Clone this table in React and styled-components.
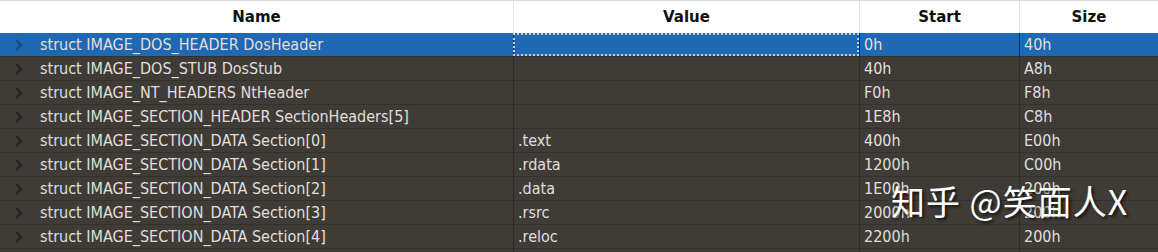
import React from 'react'
import styled, { createGlobalStyle } from 'styled-components'

const Global = createGlobalStyle`
  html, body { margin: 0; padding: 0; background: #3f3c38; }
  body { width: 1158px; height: 252px; overflow: hidden; }
`

const cols = '513px 346px 160px 1fr'

const Table = styled.div`
  position: relative;
  width: 1158px;
  height: 252px;
  overflow: hidden;
  background: #3f3c38;
`

const Header = styled.div`
  display: grid;
  grid-template-columns: ${cols};
  height: 32px;
  background: #fff;
  border-top: 1px solid #d9d9d9;
`

const HeadCell = styled.div`
  display: flex;
  align-items: center;
  justify-content: center;
  font-family: "DejaVu Sans", sans-serif;
  font-weight: bold;
  font-size: 15px;
  color: #111;
  border-left: ${p => (p.first ? 'none' : '1px solid #e3e3e3')};
  padding-bottom: 1px;
`

const Row = styled.div`
  display: grid;
  grid-template-columns: ${cols};
  height: 23px;
  border-bottom: 1px solid #33312e;
  background: ${p => (p.selected ? '#1f68b2' : '#3f3c38')};
`

const Cell = styled.div`
  display: flex;
  align-items: center;
  box-sizing: border-box;
  padding-left: ${p => p.pad || 4}px;
  font-family: "DejaVu Sans Condensed", "DejaVu Sans", sans-serif;
  font-size: 16px;
  color: #e2dfda;
  white-space: nowrap;
  border-left: ${p => (p.first ? 'none' : '1px solid #2e2c29')};
  ${p => p.focus && `
    outline: 2px dotted #c8ccd2;
    outline-offset: -2px;
  `}
`

const Chevron = styled.svg`
  width: 10px;
  height: 12px;
  margin: 0 16px 0 -26px;
  flex-shrink: 0;
`

const Watermark = styled.div`
  position: absolute;
  left: 891px;
  top: 176px;
  font-family: "Noto Sans CJK SC", sans-serif;
  font-size: 34px;
  color: #fff;
  letter-spacing: 1px;
  text-shadow: 2px 2px 3px rgba(0, 0, 0, 0.7);
  white-space: nowrap;
`

const rows = [
  ['struct IMAGE_DOS_HEADER DosHeader', '', '0h', '40h'],
  ['struct IMAGE_DOS_STUB DosStub', '', '40h', 'A8h'],
  ['struct IMAGE_NT_HEADERS NtHeader', '', 'F0h', 'F8h'],
  ['struct IMAGE_SECTION_HEADER SectionHeaders[5]', '', '1E8h', 'C8h'],
  ['struct IMAGE_SECTION_DATA Section[0]', '.text', '400h', 'E00h'],
  ['struct IMAGE_SECTION_DATA Section[1]', '.rdata', '1200h', 'C00h'],
  ['struct IMAGE_SECTION_DATA Section[2]', '.data', '1E00h', '200h'],
  ['struct IMAGE_SECTION_DATA Section[3]', '.rsrc', '2000h', '200h'],
  ['struct IMAGE_SECTION_DATA Section[4]', '.reloc', '2200h', '200h'],
  ['', '', '', ''],
]

export default function App() {
  return (
    <>
      <Global />
      <Table>
        <Header>
          <HeadCell first>Name</HeadCell>
          <HeadCell>Value</HeadCell>
          <HeadCell>Start</HeadCell>
          <HeadCell>Size</HeadCell>
        </Header>
        {rows.map((r, i) => (
          <Row key={i} selected={i === 0}>
            <Cell first pad={40}>
              {r[0] && (
                <Chevron viewBox="0 0 10 12">
                  <path d="M2 1 L7 6 L2 11" fill="none" stroke={i === 0 ? '#174e8a' : '#2a2826'} strokeWidth="2.6" />
                </Chevron>
              )}
              {r[0]}
            </Cell>
            <Cell focus={i === 0}>{r[1]}</Cell>
            <Cell>{r[2]}</Cell>
            <Cell>{r[3]}</Cell>
          </Row>
        ))}
        <Watermark>知乎 @笑面人X</Watermark>
      </Table>
    </>
  )
}
